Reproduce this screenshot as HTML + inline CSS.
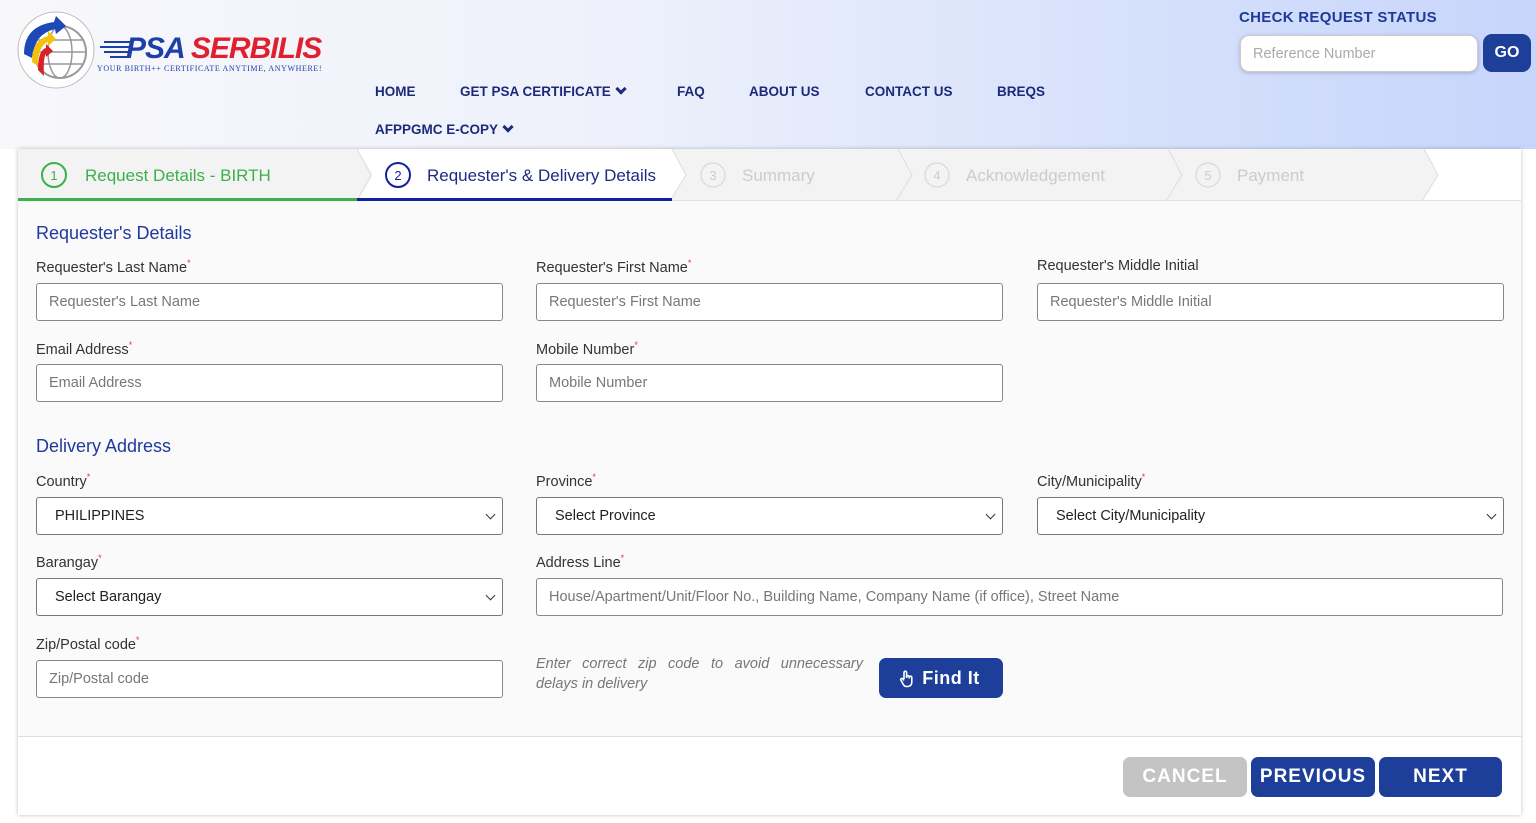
<!DOCTYPE html>
<html><head><meta charset="utf-8"><style>
*{box-sizing:border-box;margin:0;padding:0}
body{width:1536px;height:823px;overflow:hidden;background:#fff;font-family:"Liberation Sans",Arial,sans-serif;position:relative}
.a{position:absolute}
.hdr{left:0;top:0;width:1536px;height:149px;background:linear-gradient(90deg,#f8f8fb 0%,#eef1fb 40%,#d5e0fb 75%,#c8d5fb 100%)}
.nav{font-size:13.5px;font-weight:bold;color:#1b2a7a}
.card{left:18px;top:149px;width:1503px;height:666px;background:#fafafa;box-shadow:0 0 4px rgba(0,0,0,.25)}
.sec{font-size:18px;color:#1f3a9c}
.lbl{font-size:14.5px;color:#333}
.lbl sup{color:#e33;font-size:9px}
.inp{height:38px;border:1px solid #888;border-radius:3px;background:#fff;font-size:14.5px;color:#777;padding:10px 12px;width:467px}
.sel{height:38px;border:1px solid #777;border-radius:3px;background:#fff;font-size:14.5px;color:#222;padding:10px 18px;width:467px}
.sel:after{content:"";position:absolute;right:8px;top:13px;width:6px;height:6px;border-right:1.5px solid #333;border-bottom:1.5px solid #333;transform:rotate(45deg)}
.btn{height:40px;border-radius:7px;color:#fff;font-weight:bold;font-size:19px;text-align:center;line-height:40px;letter-spacing:1px}
.chev{display:inline-block;width:8px;height:8px;border-right:3px solid #1b2a7a;border-bottom:3px solid #1b2a7a;transform:rotate(45deg);margin-left:6px;position:relative;top:-3px}
</style></head><body>
<div class="a hdr"></div>
<svg class="a" style="left:10px;top:4px" width="92" height="90" viewBox="0 0 92 90">
<circle cx="46" cy="46" r="38" fill="#fff" stroke="#bbb" stroke-width="1"/>
<circle cx="50" cy="48" r="26" fill="none" stroke="#999" stroke-width="2"/>
<ellipse cx="50" cy="48" rx="12" ry="26" fill="none" stroke="#999" stroke-width="1.5"/>
<line x1="24" y1="48" x2="76" y2="48" stroke="#999" stroke-width="1.5"/>
<line x1="28" y1="36" x2="72" y2="36" stroke="#999" stroke-width="1.5"/>
<line x1="28" y1="60" x2="72" y2="60" stroke="#999" stroke-width="1.5"/>
<path d="M14 50 Q14 22 44 18 L46 12 L56 22 L46 30 L45 25 Q24 30 22 54 Z" fill="#1d49b8"/>
<path d="M22 58 Q22 36 38 32 L38 27 L46 35 L38 42 L38 38 Q28 42 28 62 Z" fill="#f4c20d"/>
<path d="M28 66 Q28 46 36 44 L36 40 L43 47 L36 53 L36 50 Q33 54 34 72 Z" fill="#d8222a"/>
</svg>
<svg class="a" style="left:100px;top:36px" width="30" height="26"><g stroke="#1d3fa8" stroke-width="2"><line x1="4" y1="6" x2="30" y2="6"/><line x1="0" y1="11" x2="30" y2="11"/><line x1="4" y1="16" x2="30" y2="16"/><line x1="10" y1="21" x2="30" y2="21"/></g></svg>
<div class="a" style="left:126px;top:32px;font-size:30px;font-weight:bold;font-style:italic;letter-spacing:-1px;color:#1d3fa8">PSA <span style="color:#e0202e">SERBILIS</span></div>
<div class="a" style="left:97px;top:64px;font-family:'Liberation Serif',serif;font-size:8px;letter-spacing:0.6px;color:#1d3fa8;white-space:nowrap">YOUR BIRTH++ CERTIFICATE ANYTIME, ANYWHERE!</div>
<div class="a nav" style="left:375px;top:84px">HOME</div>
<div class="a nav" style="left:460px;top:84px">GET PSA CERTIFICATE<span class="chev"></span></div>
<div class="a nav" style="left:677px;top:84px">FAQ</div>
<div class="a nav" style="left:749px;top:84px">ABOUT US</div>
<div class="a nav" style="left:865px;top:84px">CONTACT US</div>
<div class="a nav" style="left:997px;top:84px">BREQS</div>
<div class="a nav" style="left:375px;top:122px">AFPPGMC E-COPY<span class="chev"></span></div>
<div class="a" style="left:1239px;top:9px;font-size:15px;font-weight:bold;color:#1d3a9a;letter-spacing:0.3px">CHECK REQUEST STATUS</div>
<div class="a" style="left:1240px;top:35px;width:238px;height:37px;background:#fff;border:1px solid #ccc;border-radius:9px;box-shadow:0 1px 4px rgba(0,0,0,.2);font-size:14.5px;color:#aaa;padding:10px 12px">Reference Number</div>
<div class="a" style="left:1483px;top:34px;width:48px;height:38px;background:#1d3f9a;border-radius:9px;color:#fff;font-weight:bold;font-size:16px;text-align:center;line-height:38px">GO</div>

<div class="a card"></div>
<svg class="a" style="left:18px;top:149px" width="1503" height="53">
<rect x="0" y="0" width="1503" height="52" fill="#fff"/>
<path d="M0 0 H1406 L1420 26 L1404 52 H0 Z" fill="#f3f3f3"/>
<path d="M339 0 H654 L668 26 L652 52 H339 L355 26 Z" fill="#fff"/>
<g fill="none" stroke="#ddd" stroke-width="1"><path d="M880 0 L894 26 L878 52"/><path d="M1150 0 L1164 26 L1148 52"/><path d="M1406 0 L1420 26 L1404 52"/><path d="M339 0 L353 26 L339 52"/><path d="M654 0 L668 26 L652 52"/></g>
<rect x="0" y="49" width="339" height="3" fill="#3cb04a"/>
<rect x="339" y="49" width="315" height="3" fill="#12229a"/>
<rect x="654" y="51" width="849" height="1" fill="#e3e3e3"/>
<circle cx="36" cy="26" r="12" fill="none" stroke="#3cb04a" stroke-width="2"/>
<circle cx="380" cy="26" r="12" fill="none" stroke="#12229a" stroke-width="2"/>
<circle cx="695" cy="26" r="12" fill="none" stroke="#ddd" stroke-width="1.5"/>
<circle cx="919" cy="26" r="12" fill="none" stroke="#ddd" stroke-width="1.5"/>
<circle cx="1190" cy="26" r="12" fill="none" stroke="#ddd" stroke-width="1.5"/>
<g font-family="Liberation Sans,Arial,sans-serif" font-size="13" text-anchor="middle"><text x="36" y="31" fill="#3cb04a">1</text><text x="380" y="31" fill="#12229a">2</text><text x="695" y="31" fill="#ccc">3</text><text x="919" y="31" fill="#ccc">4</text><text x="1190" y="31" fill="#ccc">5</text></g>
<g font-family="Liberation Sans,Arial,sans-serif" font-size="17"><text x="67" y="32" fill="#3cb04a">Request Details - BIRTH</text><text x="409" y="32" fill="#1f2a80">Requester's &amp; Delivery Details</text><text x="724" y="32" fill="#ccc">Summary</text><text x="948" y="32" fill="#ccc">Acknowledgement</text><text x="1219" y="32" fill="#ccc">Payment</text></g>
</svg>

<div class="a sec" style="left:36px;top:223px">Requester's Details</div>
<div class="a lbl" style="left:36px;top:258px">Requester's Last Name<sup>*</sup></div>
<div class="a lbl" style="left:536px;top:258px">Requester's First Name<sup>*</sup></div>
<div class="a lbl" style="left:1037px;top:258px">Requester's Middle Initial</div>
<div class="a inp" style="left:36px;top:283px">Requester's Last Name</div>
<div class="a inp" style="left:536px;top:283px">Requester's First Name</div>
<div class="a inp" style="left:1037px;top:283px">Requester's Middle Initial</div>
<div class="a lbl" style="left:36px;top:340px">Email Address<sup>*</sup></div>
<div class="a lbl" style="left:536px;top:340px">Mobile Number<sup>*</sup></div>
<div class="a inp" style="left:36px;top:364px">Email Address</div>
<div class="a inp" style="left:536px;top:364px">Mobile Number</div>

<div class="a sec" style="left:36px;top:436px">Delivery Address</div>
<div class="a lbl" style="left:36px;top:472px">Country<sup>*</sup></div>
<div class="a lbl" style="left:536px;top:472px">Province<sup>*</sup></div>
<div class="a lbl" style="left:1037px;top:472px">City/Municipality<sup>*</sup></div>
<div class="a sel" style="left:36px;top:497px">PHILIPPINES</div>
<div class="a sel" style="left:536px;top:497px">Select Province</div>
<div class="a sel" style="left:1037px;top:497px">Select City/Municipality</div>
<div class="a lbl" style="left:36px;top:553px">Barangay<sup>*</sup></div>
<div class="a lbl" style="left:536px;top:553px">Address Line<sup>*</sup></div>
<div class="a sel" style="left:36px;top:578px">Select Barangay</div>
<div class="a inp" style="left:536px;top:578px;width:967px">House/Apartment/Unit/Floor No., Building Name, Company Name (if office), Street Name</div>
<div class="a lbl" style="left:36px;top:635px">Zip/Postal code<sup>*</sup></div>
<div class="a inp" style="left:36px;top:660px">Zip/Postal code</div>
<div class="a" style="left:536px;top:654px;width:327px;font-size:14.5px;font-style:italic;color:#777;line-height:20px;text-align:justify;text-align-last:left">Enter correct zip code to avoid unnecessary delays in delivery</div>
<div class="a btn" style="left:879px;top:658px;width:124px;background:#1d3f9a;font-size:18px;letter-spacing:0.5px;padding-left:20px">Find It</div>
<svg class="a" style="left:899px;top:670px" width="16" height="18" viewBox="0 0 16 18"><path d="M5 9 V2.5 a1.3 1.3 0 0 1 2.6 0 V8 M7.6 7 a1.3 1.3 0 0 1 2.6 0 V8.5 M10.2 7.5 a1.3 1.3 0 0 1 2.6 0 V12 Q12.8 16 9 16.5 H7.5 Q5 16.5 3.5 13 L1.8 10 a1.2 1.2 0 0 1 2 -1.2 L5 10.5" fill="none" stroke="#fff" stroke-width="1.6" stroke-linejoin="round"/></svg>

<div class="a" style="left:18px;top:736px;width:1503px;height:79px;background:#fff;border-top:1px solid #ddd"></div>
<div class="a btn" style="left:1123px;top:757px;width:124px;background:#c4c4c4">CANCEL</div>
<div class="a btn" style="left:1251px;top:757px;width:124px;background:#1d3f9a">PREVIOUS</div>
<div class="a btn" style="left:1379px;top:757px;width:123px;background:#1d3f9a">NEXT</div>
</body></html>
